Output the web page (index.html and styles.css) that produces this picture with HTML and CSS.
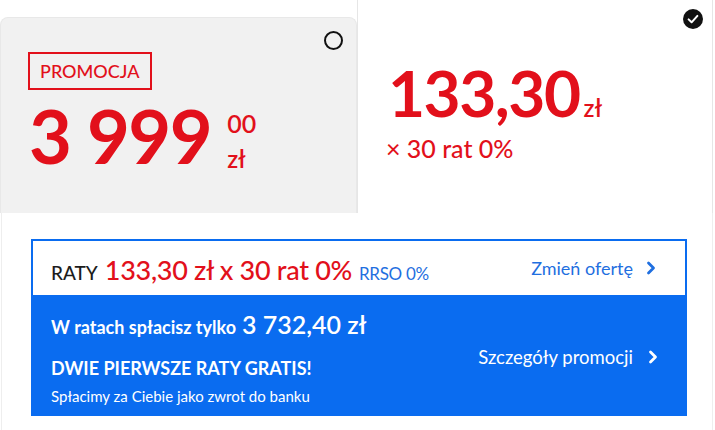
FILE: index.html
```html
<!DOCTYPE html>
<html lang="pl">
<head>
<meta charset="utf-8">
<link rel="stylesheet" href="styles.css">
</head>
<body>
<div class="wrap">
  <div class="top">
    <div class="card card-promo">
      <span class="radio"></span>
      <div class="badge">PROMOCJA</div>
      <div class="price">
        <span class="price-main">3 999</span>
        <span class="price-side"><span class="price-gr">00</span><span class="price-cur">zł</span></span>
      </div>
    </div>
    <div class="card card-raty">
      <span class="check">
        <svg width="20" height="20" viewBox="0 0 20 20"><circle cx="10" cy="10" r="10" fill="#111"/><polyline points="5.6,10.4 8.6,13.3 14.4,6.9" fill="none" stroke="#fff" stroke-width="2" stroke-linecap="round" stroke-linejoin="round"/></svg>
      </span>
      <div class="rate">
        <span class="rate-main">133,30</span><span class="rate-cur">zł</span>
      </div>
      <div class="rate-sub">× 30 rat 0%</div>
    </div>
  </div>
  <div class="bottom">
    <div class="offer">
      <div class="offer-head">
        <div class="offer-left">
          <span class="lbl">RATY</span>
          <span class="val">133,30 zł x 30 rat 0%</span>
          <span class="rrso">RRSO 0%</span>
        </div>
        <a class="link link-blue">Zmień ofertę
          <svg class="chev" width="10" height="14" viewBox="0 0 10 14"><polyline points="2.5,2 7.5,7 2.5,12" fill="none" stroke="currentColor" stroke-width="2.8" stroke-linecap="round" stroke-linejoin="round"/></svg>
        </a>
      </div>
      <div class="offer-body">
        <div class="body-left">
          <div class="total"><span class="total-lbl">W ratach spłacisz tylko</span> <span class="total-val">3 732,40 zł</span></div>
          <div class="promo-title">DWIE PIERWSZE RATY GRATIS!</div>
          <div class="promo-desc">Spłacimy za Ciebie jako zwrot do banku</div>
        </div>
        <a class="link link-white">Szczegóły promocji
          <svg class="chev" width="10" height="14" viewBox="0 0 10 14"><polyline points="2.5,2 7.5,7 2.5,12" fill="none" stroke="currentColor" stroke-width="2.8" stroke-linecap="round" stroke-linejoin="round"/></svg>
        </a>
      </div>
    </div>
  </div>
</div>
</body>
</html>
```
FILE: styles.css
```css
* { box-sizing: border-box; }
html, body { margin: 0; padding: 0; background: #fff; }
body { font-family: Lato, "Noto Sans", "Liberation Sans", sans-serif; }

.wrap { width: 715px; height: 430px; overflow: hidden; }

.top { display: flex; align-items: flex-end; height: 213px; }

.card { position: relative; }

.card-promo {
  width: 357px;
  height: 196px;
  background: #f1f1f1;
  border: 1px solid #e8e8e8;
  border-bottom: none;
  border-radius: 8px 8px 0 0;
  padding: 34px 0 0 27px;
}

.radio {
  position: absolute;
  top: 13px;
  right: 13px;
  width: 19px;
  height: 19px;
  border: 2.5px solid #111;
  border-radius: 50%;
}

.badge {
  display: inline-block;
  border: 2px solid #e2101b;
  color: #e2101b;
  font-size: 18px;
  font-weight: 500;
  line-height: 34px;
  padding: 0 10px;
  height: 38px;
}

.price { display: flex; align-items: flex-start; color: #e2101b; margin-top: 6px; margin-left: 1px; }
.price-main { font-size: 74px; font-weight: 700; line-height: 80px; letter-spacing: -1.5px; }
.price-side { display: flex; flex-direction: column; margin-left: 16px; padding-top: 14px; }
.price-gr { font-size: 25px; font-weight: 600; line-height: 26px; }
.price-cur { font-size: 24px; font-weight: 600; line-height: 26px; margin-top: 10px; }

.card-raty {
  width: 356px;
  height: 213px;
  background: #fff;
  border-left: 1px solid #e6e6e6;
  border-right: 1px solid #e6e6e6;
  padding: 58px 0 0 30px;
  color: #e2101b;
}

.check { position: absolute; top: 9px; right: 9px; width: 20px; height: 20px; }
.check svg { display: block; }

.rate { display: flex; align-items: baseline; }
.rate-main { font-size: 64px; font-weight: 700; line-height: 70px; letter-spacing: -1.5px; }
.rate-cur { font-size: 24px; font-weight: 600; margin-left: 4px; }
.rate-sub { font-size: 25px; font-weight: 500; margin-top: 5px; margin-left: -2px; }

.bottom {
  height: 217px;
  margin-left: 1px;
  width: 712px;
  border-left: 1px solid #eeeeee;
  border-right: 1px solid #eeeeee;
  padding: 26px 0 0 29px;
}

.offer { width: 656px; }

.offer-head {
  height: 56px;
  border: 2px solid #0a6cf0;
  border-bottom: none;
  display: flex;
  align-items: center;
  justify-content: space-between;
  padding: 0 29px 0 18px;
}
.offer-left { display: flex; align-items: baseline; gap: 7px; padding-top: 3px; }
.lbl { font-size: 19px; font-weight: 500; color: #1c1c1c; }
.val { font-size: 27px; font-weight: 500; color: #e2101b; letter-spacing: -0.3px; }
.rrso { font-size: 17px; color: #1f6fe0; letter-spacing: -0.3px; }

.link { display: flex; align-items: center; gap: 13px; font-size: 18px; cursor: pointer; }
.link-blue { color: #1f6fe0; }
.link-white { color: #fff; padding-bottom: 12px; gap: 15px; font-size: 18.5px; }
.chev { display: block; }

.offer-body {
  height: 121px;
  background: #0a6cf0;
  color: #fff;
  display: flex;
  justify-content: space-between;
  align-items: center;
  padding: 14px 29px 0 20px;
}
.body-left { align-self: flex-start; }
.total { display: flex; align-items: baseline; gap: 6px; }
.total-lbl { font-size: 18px; font-weight: 700; }
.total-val { font-size: 25px; font-weight: 600; }
.promo-title { font-size: 18px; font-weight: 700; margin-top: 18px; }
.promo-desc { font-size: 15px; margin-top: 8px; }
```
